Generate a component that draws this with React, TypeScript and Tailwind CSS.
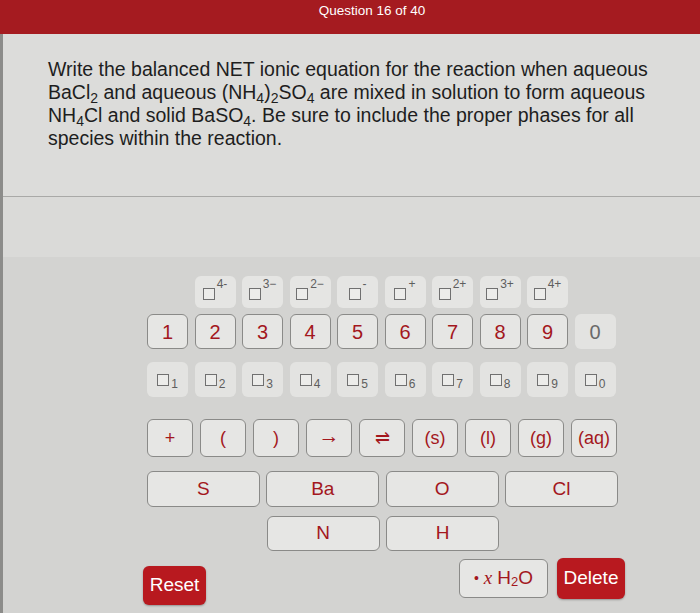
import React from "react";

const charges = ["4-", "3−", "2−", "-", "+", "2+", "3+", "4+"];
const digits = ["1", "2", "3", "4", "5", "6", "7", "8", "9"];
const subs = ["1", "2", "3", "4", "5", "6", "7", "8", "9", "0"];
const symbols = ["+", "(", ")", "→", "⇌", "(s)", "(l)", "(g)", "(aq)"];

function Box() {
  return <span className="inline-block w-[12px] h-[12px] border border-[#707070] bg-[#ececea]" />;
}

function Sub({ children }: { children: React.ReactNode }) {
  return <sub className="text-[14px] leading-none">{children}</sub>;
}

export default function App() {
  return (
    <div className="w-[700px] h-[613px] overflow-hidden bg-[#d3d3d1] font-['Liberation_Sans',Arial,sans-serif]">
      {/* Header */}
      <div className="h-[34px] bg-[#a51b20] flex justify-center pl-[44px] pt-[3px]">
        <span className="text-white text-[13.5px] leading-[16px]">Question 16 of 40</span>
      </div>

      <div className="border-l-[3px] border-[#8c8c8a] h-[579px]">
        {/* Question */}
        <div className="h-[163px] bg-[#dcdcda] border-b border-[#a9a9a7] pl-[45px] pt-[24px]">
          <p className="text-[19.5px] leading-[23px] text-[#1e1e1e] w-[640px]">
            Write the balanced NET ionic equation for the reaction when aqueous
            BaCl<Sub>2</Sub> and aqueous (NH<Sub>4</Sub>)<Sub>2</Sub>SO<Sub>4</Sub> are mixed in solution to form aqueous
            NH<Sub>4</Sub>Cl and solid BaSO<Sub>4</Sub>. Be sure to include the proper phases for all
            species within the reaction.
          </p>
        </div>
        <div className="h-[60px] bg-[#dadad8]" />

        {/* Keypad */}
        <div className="pt-[19px]">
          <div className="ml-[144px] w-[471px]">
            <div className="flex gap-[6.5px] pl-[47.5px]">
              {charges.map((c) => (
                <div
                  key={c}
                  className="w-[41px] h-[32px] rounded-[6px] bg-[#e5e5e3] flex items-center justify-center"
                >
                  <span className="flex items-start">
                    <span className="mt-[5px]"><Box /></span>
                    <span className="text-[12px] leading-none text-[#5e5e5e] ml-[2px]">{c}</span>
                  </span>
                </div>
              ))}
            </div>

            <div className="flex gap-[6.5px] mt-[6px]">
              {digits.map((d) => (
                <div
                  key={d}
                  className="w-[41px] h-[35px] rounded-[6px] bg-[#e6e6e4] border border-[#8a8a88] flex items-center justify-center text-[20px] text-[#a3171d]"
                >
                  {d}
                </div>
              ))}
              <div className="w-[41px] h-[35px] rounded-[6px] bg-[#e3e3e1] flex items-center justify-center text-[20px] text-[#6a6a6a]">
                0
              </div>
            </div>

            <div className="flex gap-[6.5px] mt-[13px]">
              {subs.map((s) => (
                <div
                  key={s}
                  className="w-[41px] h-[35px] rounded-[6px] bg-[#e3e3e1] flex items-center justify-center"
                >
                  <span className="flex items-end">
                    <Box />
                    <span className="text-[12px] leading-none text-[#5e5e5e] ml-[2px] mb-[-4px]">{s}</span>
                  </span>
                </div>
              ))}
            </div>

            <div className="flex gap-[7px] mt-[22px]">
              {symbols.map((s) => (
                <div
                  key={s}
                  className="w-[46px] h-[38px] rounded-[6px] bg-[#e6e6e4] border border-[#8a8a88] flex items-center justify-center text-[18px] text-[#a3171d]"
                >
                  {s === "→" ? (
                    <span className="text-[21px] leading-none relative top-[-3px]">→</span>
                  ) : (
                    s
                  )}
                </div>
              ))}
            </div>

            <div className="flex gap-[6.5px] mt-[14px]">
              {["S", "Ba", "O", "Cl"].map((e) => (
                <div
                  key={e}
                  className="w-[113px] h-[36px] rounded-[6px] bg-[#e6e6e4] border border-[#8a8a88] flex items-center justify-center text-[19px] text-[#a3171d]"
                >
                  {e}
                </div>
              ))}
            </div>

            <div className="flex gap-[6.5px] mt-[9px] pl-[119.5px]">
              {["N", "H"].map((e) => (
                <div
                  key={e}
                  className="w-[113px] h-[35px] rounded-[6px] bg-[#e6e6e4] border border-[#8a8a88] flex items-center justify-center text-[19px] text-[#a3171d]"
                >
                  {e}
                </div>
              ))}
            </div>
          </div>

          {/* Bottom buttons */}
          <div className="ml-[140px] w-[482px] flex justify-between items-start mt-[7px]">
            <button className="mt-[8px] w-[63px] h-[39px] rounded-[6px] bg-[#b8191f] text-white text-[19px] shadow-[0_1px_2px_rgba(0,0,0,0.3)]">
              Reset
            </button>
            <div className="flex items-start gap-[9px]">
              <button className="mt-[1px] w-[89px] h-[39px] rounded-[6px] bg-[#e6e6e4] border border-[#8a8a88] flex items-center justify-center text-[19px] text-[#a3171d]">
                <span className="text-[14px] mr-[5px]">•</span>
                <span className="italic font-['Liberation_Serif',serif] mr-[5px]">x</span>
                H<sub className="text-[13px] leading-none">2</sub>O
              </button>
              <button className="w-[68px] h-[41px] rounded-[6px] bg-[#b8191f] text-white text-[19px] shadow-[0_1px_2px_rgba(0,0,0,0.3)]">
                Delete
              </button>
            </div>
          </div>
        </div>
      </div>
    </div>
  );
}
